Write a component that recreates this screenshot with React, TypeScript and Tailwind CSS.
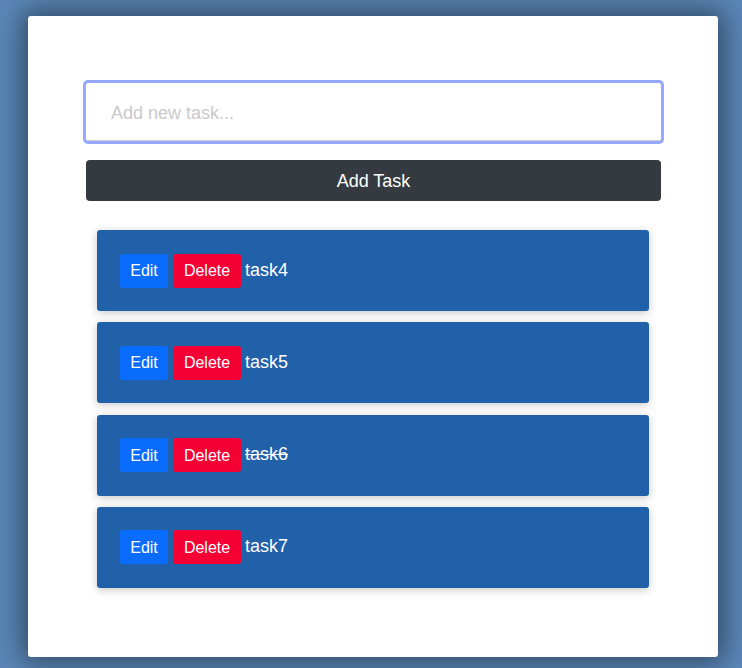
import React from "react";

const tasks = [
  { name: "task4", done: false },
  { name: "task5", done: false },
  { name: "task6", done: true },
  { name: "task7", done: false },
];

export default function App() {
  return (
    <div
      className="min-h-[668px] bg-[#5b88b8] pt-4 pl-7 pr-6 pb-[11px]"
      style={{ fontFamily: '"Liberation Sans", Arial, sans-serif' }}
    >
      <div className="h-[641px] w-[690px] rounded-[3px] bg-white pt-[67px] pl-[58px] pr-[57px] shadow-[0_0_28px_6px_rgba(20,30,45,0.6)]">
        <input
          autoFocus
          type="text"
          placeholder="Add new task..."
          className="block h-[58px] w-full rounded-[2px] border-0 border-b border-[#d4cccc] bg-white pt-[3px] pl-[25px] text-[18px] text-black caret-black outline-none ring-[3px] ring-[#94a9ff] placeholder:text-[#c9c9c9]"
        />
        <button className="mt-[19px] flex h-[41px] w-full items-center justify-center rounded-[4px] bg-[#343a40] pt-[2px] text-[18px] text-white">
          Add Task
        </button>
        <div className="mt-[29px] ml-[11px] mr-[12px] flex flex-col gap-[11.3px]">
          {tasks.map((t) => (
            <div
              key={t.name}
              className="flex h-[81px] items-center rounded-[3px] bg-[#2161a9] pl-[23px] shadow-[0_2px_8px_rgba(0,0,0,0.22)]"
            >
              <button className="flex h-[34px] w-[48px] items-center justify-center rounded-[3px] bg-[#0a6cfd] pt-[1px] text-[16px] text-white">
                Edit
              </button>
              <button className="ml-[5px] flex h-[34px] w-[68px] items-center justify-center rounded-[3px] bg-[#f50035] pt-[1px] text-[16px] text-white">
                Delete
              </button>
              <span
                className={
                  "ml-[4px] -mt-[1px] text-[18px] text-white" +
                  (t.done ? " line-through" : "")
                }
              >
                {t.name}
              </span>
            </div>
          ))}
        </div>
      </div>
    </div>
  );
}
